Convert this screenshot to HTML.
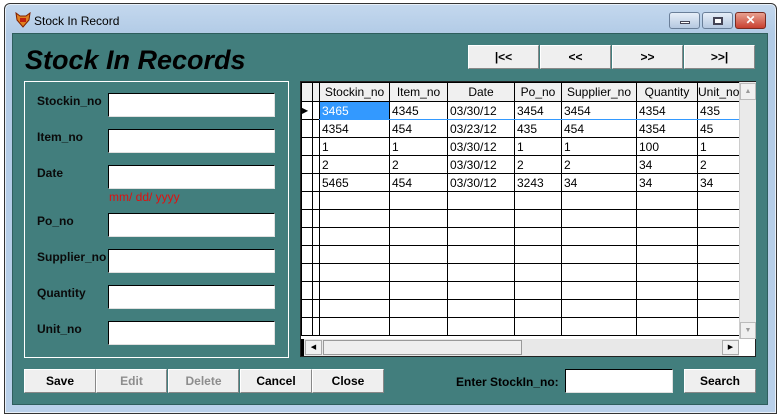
<!DOCTYPE html>
<html><head><style>
*{margin:0;padding:0;box-sizing:border-box}
body{width:780px;height:417px;background:#fff;position:relative;overflow:hidden;font-family:"Liberation Sans",Arial,sans-serif}
.a{position:absolute}
.frame{left:4px;top:3px;width:773px;height:411px;border:1px solid #333;border-radius:6px 6px 0 0;background:linear-gradient(#c4d8ee,#b2cbe6 30px,#b9d0ea);box-shadow:inset 0 0 0 1px #e8f0f8}
.client{left:12px;top:33px;width:756px;height:372px;background:#427e7d;border:1px solid #2e5e5d}
.btn{position:absolute;background:#efefef;border:1px solid;border-color:#fff #888 #888 #fff;font-size:12px;font-weight:bold;text-align:center;line-height:22px;color:#000}
.btn.dis{color:#8d8d8d}
.inp{position:absolute;background:#fff;border:1px solid;border-color:#000 #e0e0e0 #e0e0e0 #000;width:167px;height:24px;left:108px}
.lbl{position:absolute;left:37px;font-size:12px;font-weight:bold;color:#0a0a0a}
.grid{left:300px;top:81px;width:456px;height:276px;background:#fff;border:1px solid #222}
table{border-collapse:collapse;position:absolute;left:0;top:0;font-size:12px}
td{border:1px solid #000;height:18px;padding:0 2px;white-space:nowrap;overflow:hidden}
th{font-weight:normal;background:#f0f0f0;border:1px solid #000;height:19px;text-align:center;white-space:nowrap;overflow:hidden}
</style></head><body>
<div class="a frame"></div>
<svg class="a" style="left:15px;top:12px" width="16" height="16"><path d="M1 1 L5 4 L11 4 L15 1 L14 8 L8 15 L2 8 Z" fill="#e08020" stroke="#802000"/><rect x="5" y="6" width="6" height="4" fill="#c02010"/></svg>
<div class="a" style="left:34px;top:14px;font-size:12px;color:#000">Stock In Record</div>
<div class="a" style="left:669px;top:12px;width:31px;height:17px;border:1px solid #6a7f99;border-radius:3px;background:linear-gradient(#e6eef8,#b5c8e0)"><div class="a" style="left:10px;top:8px;width:10px;height:3px;background:#fff;border:1px solid #445"></div></div>
<div class="a" style="left:702px;top:12px;width:31px;height:17px;border:1px solid #6a7f99;border-radius:3px;background:linear-gradient(#e6eef8,#b5c8e0)"><div class="a" style="left:10px;top:4px;width:10px;height:8px;background:#fff;border:2px solid #445"></div></div>
<div class="a" style="left:735px;top:12px;width:31px;height:17px;border:1px solid #7a2a20;border-radius:3px;background:linear-gradient(#e8a090,#c84030);color:#fff;font-weight:bold;font-size:12px;text-align:center;line-height:15px">✕</div>
<div class="a client"></div>
<div class="a" style="left:25px;top:45px;font-size:27px;font-weight:bold;font-style:italic;color:#000">Stock In Records</div>
<div class="btn" style="left:468px;top:45px;width:71px;height:24px">|&lt;&lt;</div>
<div class="btn" style="left:540px;top:45px;width:71px;height:24px">&lt;&lt;</div>
<div class="btn" style="left:612px;top:45px;width:71px;height:24px">&gt;&gt;</div>
<div class="btn" style="left:684px;top:45px;width:71px;height:24px">&gt;&gt;|</div>
<div class="a" style="left:24px;top:81px;width:265px;height:277px;border:1px solid #fff"></div>
<div class="lbl" style="top:94px">Stockin_no</div><div class="inp" style="top:93px"></div>
<div class="lbl" style="top:130px">Item_no</div><div class="inp" style="top:129px"></div>
<div class="lbl" style="top:166px">Date</div><div class="inp" style="top:165px"></div>
<div class="a" style="left:109px;top:190px;font-size:12px;color:#e01010">mm/ dd/ yyyy</div>
<div class="lbl" style="top:214px">Po_no</div><div class="inp" style="top:213px"></div>
<div class="lbl" style="top:250px">Supplier_no</div><div class="inp" style="top:249px"></div>
<div class="lbl" style="top:286px">Quantity</div><div class="inp" style="top:285px"></div>
<div class="lbl" style="top:322px">Unit_no</div><div class="inp" style="top:321px"></div>
<div class="a grid">
<table style="width:438px;table-layout:fixed">
<colgroup><col style="width:11px"><col style="width:7px"><col style="width:70px"><col style="width:58px"><col style="width:67px"><col style="width:47px"><col style="width:75px"><col style="width:61px"><col style="width:42px"></colgroup>
<tr><th></th><th></th><th>Stockin_no</th><th>Item_no</th><th>Date</th><th>Po_no</th><th>Supplier_no</th><th>Quantity</th><th style="text-align:left">Unit_no</th></tr>
<tr><td style="font-size:8px;padding:0">▶</td><td></td><td style="background:#3399ff;color:#fff">3465</td><td>4345</td><td>03/30/12</td><td>3454</td><td>3454</td><td>4354</td><td>435</td></tr>
<tr><td></td><td></td><td>4354</td><td>454</td><td>03/23/12</td><td>435</td><td>454</td><td>4354</td><td>45</td></tr>
<tr><td></td><td></td><td>1</td><td>1</td><td>03/30/12</td><td>1</td><td>1</td><td>100</td><td>1</td></tr>
<tr><td></td><td></td><td>2</td><td>2</td><td>03/30/12</td><td>2</td><td>2</td><td>34</td><td>2</td></tr>
<tr><td></td><td></td><td>5465</td><td>454</td><td>03/30/12</td><td>3243</td><td>34</td><td>34</td><td>34</td></tr>
<tr><td></td><td></td><td></td><td></td><td></td><td></td><td></td><td></td><td></td></tr>
<tr><td></td><td></td><td></td><td></td><td></td><td></td><td></td><td></td><td></td></tr>
<tr><td></td><td></td><td></td><td></td><td></td><td></td><td></td><td></td><td></td></tr>
<tr><td></td><td></td><td></td><td></td><td></td><td></td><td></td><td></td><td></td></tr>
<tr><td></td><td></td><td></td><td></td><td></td><td></td><td></td><td></td><td></td></tr>
<tr><td></td><td></td><td></td><td></td><td></td><td></td><td></td><td></td><td></td></tr>
<tr><td></td><td></td><td></td><td></td><td></td><td></td><td></td><td></td><td></td></tr>
<tr><td></td><td></td><td></td><td></td><td></td><td></td><td></td><td></td><td></td></tr>
</table>
<div class="a" style="left:18px;top:37px;width:420px;height:1px;background:#3399ff"></div>
<div class="a" style="left:438px;top:0;width:17px;height:257px;background:#eaeaea;border-left:1px solid #ccc"></div>
<div class="a" style="left:439px;top:1px;width:16px;height:17px;background:#f0f0f0;border:1px solid #bbb;font-size:7px;color:#999;text-align:center;line-height:15px">▲</div>
<div class="a" style="left:439px;top:240px;width:16px;height:17px;background:#f0f0f0;border:1px solid #bbb;font-size:7px;color:#999;text-align:center;line-height:15px">▼</div>
<div class="a" style="left:0;top:257px;width:438px;height:17px;background:#e8e8e8"></div>
<div class="a" style="left:0;top:257px;width:3px;height:17px;background:#000"></div>
<div class="a" style="left:4px;top:258px;width:17px;height:15px;background:#f0f0f0;border:1px solid #aaa;font-size:7px;text-align:center;line-height:13px">◀</div>
<div class="a" style="left:22px;top:258px;width:199px;height:15px;background:#eee;border:1px solid #999"></div>
<div class="a" style="left:421px;top:258px;width:17px;height:15px;background:#f0f0f0;border:1px solid #aaa;font-size:7px;text-align:center;line-height:13px">▶</div>
</div>
<div class="btn" style="left:24px;top:369px;width:72px;height:24px">Save</div>
<div class="btn dis" style="left:96px;top:369px;width:71px;height:24px">Edit</div>
<div class="btn dis" style="left:168px;top:369px;width:71px;height:24px">Delete</div>
<div class="btn" style="left:240px;top:369px;width:72px;height:24px">Cancel</div>
<div class="btn" style="left:312px;top:369px;width:72px;height:24px">Close</div>
<div class="a" style="left:456px;top:375px;font-size:12px;font-weight:bold;color:#000">Enter StockIn_no:</div>
<div class="inp" style="left:565px;top:369px;width:108px"></div>
<div class="btn" style="left:684px;top:369px;width:72px;height:24px">Search</div>
</body></html>
